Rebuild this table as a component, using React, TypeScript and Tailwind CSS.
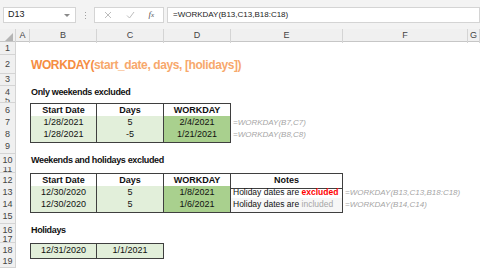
import type { ReactNode } from 'react'

const COLS = 'grid grid-cols-[16px_14px_67px_67px_67px_112px_125px_1fr]'
const LIGHT = 'bg-[#e2efda]'
const DARK = 'bg-[#a9d08e]'

interface RowProps {
  n: number
  h: string
  children?: ReactNode
}

function Row({ n, h, children }: RowProps) {
  return (
    <div className={`${COLS} ${h}`}>
      <div className="flex items-center justify-center overflow-hidden border-r border-b border-[#d4d4d4] bg-[#f0f0f0] text-[9px] leading-none text-[#444]">
        {n}
      </div>
      <div />
      {children}
    </div>
  )
}

interface CellProps {
  children?: ReactNode
  className?: string
}

// bordered table cell, centred text
function TCell({ children, className = '' }: CellProps) {
  return (
    <div className={`flex items-center justify-center border-r border-b border-[#3f3f3f] whitespace-nowrap ${className}`}>
      {children}
    </div>
  )
}

function Formula({ children }: CellProps) {
  return (
    <div className="flex items-center pl-[2px] whitespace-nowrap italic text-[8px] text-[#a6a6a6]">
      {children}
    </div>
  )
}

function Heading({ children }: CellProps) {
  return (
    <div className="col-span-3 flex items-center pl-[1px] whitespace-nowrap font-bold text-[9px] tracking-[-0.35px]">
      {children}
    </div>
  )
}

function FormulaBar() {
  return (
    <div className="h-[29px] bg-[#f3f3f3] flex items-start pt-[7px]">
      <div className="ml-[3px] w-[73px] h-[16px] bg-white border border-[#d4d4d4] flex items-center justify-between pl-[4px] pr-[5px] text-[9px] text-[#222]">
        <span>D13</span>
        <span className="w-0 h-0 border-l-[3px] border-r-[3px] border-t-[3px] border-l-transparent border-r-transparent border-t-[#8a8a8a]" />
      </div>
      <div className="w-[18px] h-[16px] flex flex-col items-center justify-center gap-[2px]">
        <span className="w-[1px] h-[1px] bg-[#a0a0a0]" />
        <span className="w-[1px] h-[1px] bg-[#a0a0a0]" />
        <span className="w-[1px] h-[1px] bg-[#a0a0a0]" />
      </div>
      <div className="w-[70px] h-[16px] bg-white border border-[#d4d4d4] flex items-center justify-around px-[2px]">
        <svg width="8" height="8" viewBox="0 0 8 8" stroke="#bdbdbd" strokeWidth="1">
          <path d="M1 1 L7 7 M7 1 L1 7" />
        </svg>
        <svg width="9" height="8" viewBox="0 0 9 8" stroke="#bdbdbd" strokeWidth="1" fill="none">
          <path d="M1 4.5 L3.5 7 L8 1" />
        </svg>
        <span className="italic text-[9px] text-[#555] font-['Liberation_Serif',serif]">
          f<span className="text-[7px]">x</span>
        </span>
      </div>
      <div className="ml-[3px] flex-1 h-[16px] bg-white border border-[#d4d4d4] flex items-center pl-[5px] text-[8px] text-[#222]">
        =WORKDAY(B13,C13,B18:C18)
      </div>
    </div>
  )
}

function ColumnHeader() {
  const letters = ['A', 'B', 'C', 'D', 'E', 'F', 'G']
  return (
    <div className={`${COLS} h-[13px] bg-[#f0f0f0] border-b border-[#c6c6c6] text-[9px] text-[#444]`}>
      <div className="relative border-r border-[#d4d4d4]">
        <span className="absolute right-[2px] bottom-[2px] w-0 h-0 border-l-[8px] border-t-[8px] border-l-transparent border-t-transparent border-b-0 border-r-0 [border-bottom:8px_solid_#b4b4b4]" />
      </div>
      {letters.map((l) => (
        <div key={l} className="flex items-center justify-center border-r border-[#d4d4d4]">
          {l}
        </div>
      ))}
    </div>
  )
}

export default function App() {
  return (
    <div className="w-[480px] h-[268px] overflow-hidden bg-white font-['Liberation_Sans',Arial,sans-serif] text-[#111]">
      <FormulaBar />
      <ColumnHeader />
      <div className="text-[9px]">
        <Row n={1} h="h-[13px]" />
        <Row n={2} h="h-[19px]">
          <div className="col-span-5 flex items-center pl-[1px] whitespace-nowrap font-bold text-[12px] tracking-[-0.4px]">
            <span className="text-[#f58d42]">WORKDAY(</span>
            <span className="text-[#f7a86c]">start_date, days, [holidays])</span>
          </div>
        </Row>
        <Row n={3} h="h-[12px]" />
        <Row n={4} h="h-[12px]">
          <Heading>Only weekends excluded</Heading>
        </Row>
        <Row n={5} h="h-[5px]" />
        <Row n={6} h="h-[13px]">
          <TCell className="border-l border-t font-bold">Start Date</TCell>
          <TCell className="border-t font-bold">Days</TCell>
          <TCell className="border-t font-bold">WORKDAY</TCell>
        </Row>
        <Row n={7} h="h-[12px]">
          <TCell className={`border-l ${LIGHT}`}>1/28/2021</TCell>
          <TCell className={LIGHT}>5</TCell>
          <TCell className={DARK}>2/4/2021</TCell>
          <Formula>=WORKDAY(B7,C7)</Formula>
        </Row>
        <Row n={8} h="h-[12px]">
          <TCell className={`border-l ${LIGHT}`}>1/28/2021</TCell>
          <TCell className={LIGHT}>-5</TCell>
          <TCell className={DARK}>1/21/2021</TCell>
          <Formula>=WORKDAY(B8,C8)</Formula>
        </Row>
        <Row n={9} h="h-[14px]" />
        <Row n={10} h="h-[13px]">
          <Heading>Weekends and holidays excluded</Heading>
        </Row>
        <Row n={11} h="h-[6px]" />
        <Row n={12} h="h-[13px]">
          <TCell className="border-l border-t font-bold">Start Date</TCell>
          <TCell className="border-t font-bold">Days</TCell>
          <TCell className="border-t font-bold">WORKDAY</TCell>
          <TCell className="border-t font-bold">Notes</TCell>
        </Row>
        <Row n={13} h="h-[12px]">
          <TCell className={`border-l ${LIGHT}`}>12/30/2020</TCell>
          <TCell className={LIGHT}>5</TCell>
          <TCell className={DARK}>1/8/2021</TCell>
          <TCell className="justify-start pl-[2px] text-[8.5px]">
            Holiday dates are&nbsp;<span className="font-bold text-[#ff0000]">excluded</span>
          </TCell>
          <Formula>=WORKDAY(B13,C13,B18:C18)</Formula>
        </Row>
        <Row n={14} h="h-[12px]">
          <TCell className={`border-l ${LIGHT}`}>12/30/2020</TCell>
          <TCell className={LIGHT}>5</TCell>
          <TCell className={DARK}>1/6/2021</TCell>
          <TCell className="justify-start pl-[2px] text-[8.5px] bg-[#f7f7f7]">
            Holiday dates are&nbsp;<span className="text-[#a6a6a6]">included</span>
          </TCell>
          <Formula>=WORKDAY(B14,C14)</Formula>
        </Row>
        <Row n={15} h="h-[14px]" />
        <Row n={16} h="h-[12px]">
          <Heading>Holidays</Heading>
        </Row>
        <Row n={17} h="h-[7px]" />
        <Row n={18} h="h-[12px]">
          <TCell className={`border-l border-t ${LIGHT}`}>12/31/2020</TCell>
          <TCell className={`border-t ${LIGHT}`}>1/1/2021</TCell>
        </Row>
        <Row n={19} h="h-[13px]" />
      </div>
    </div>
  )
}
